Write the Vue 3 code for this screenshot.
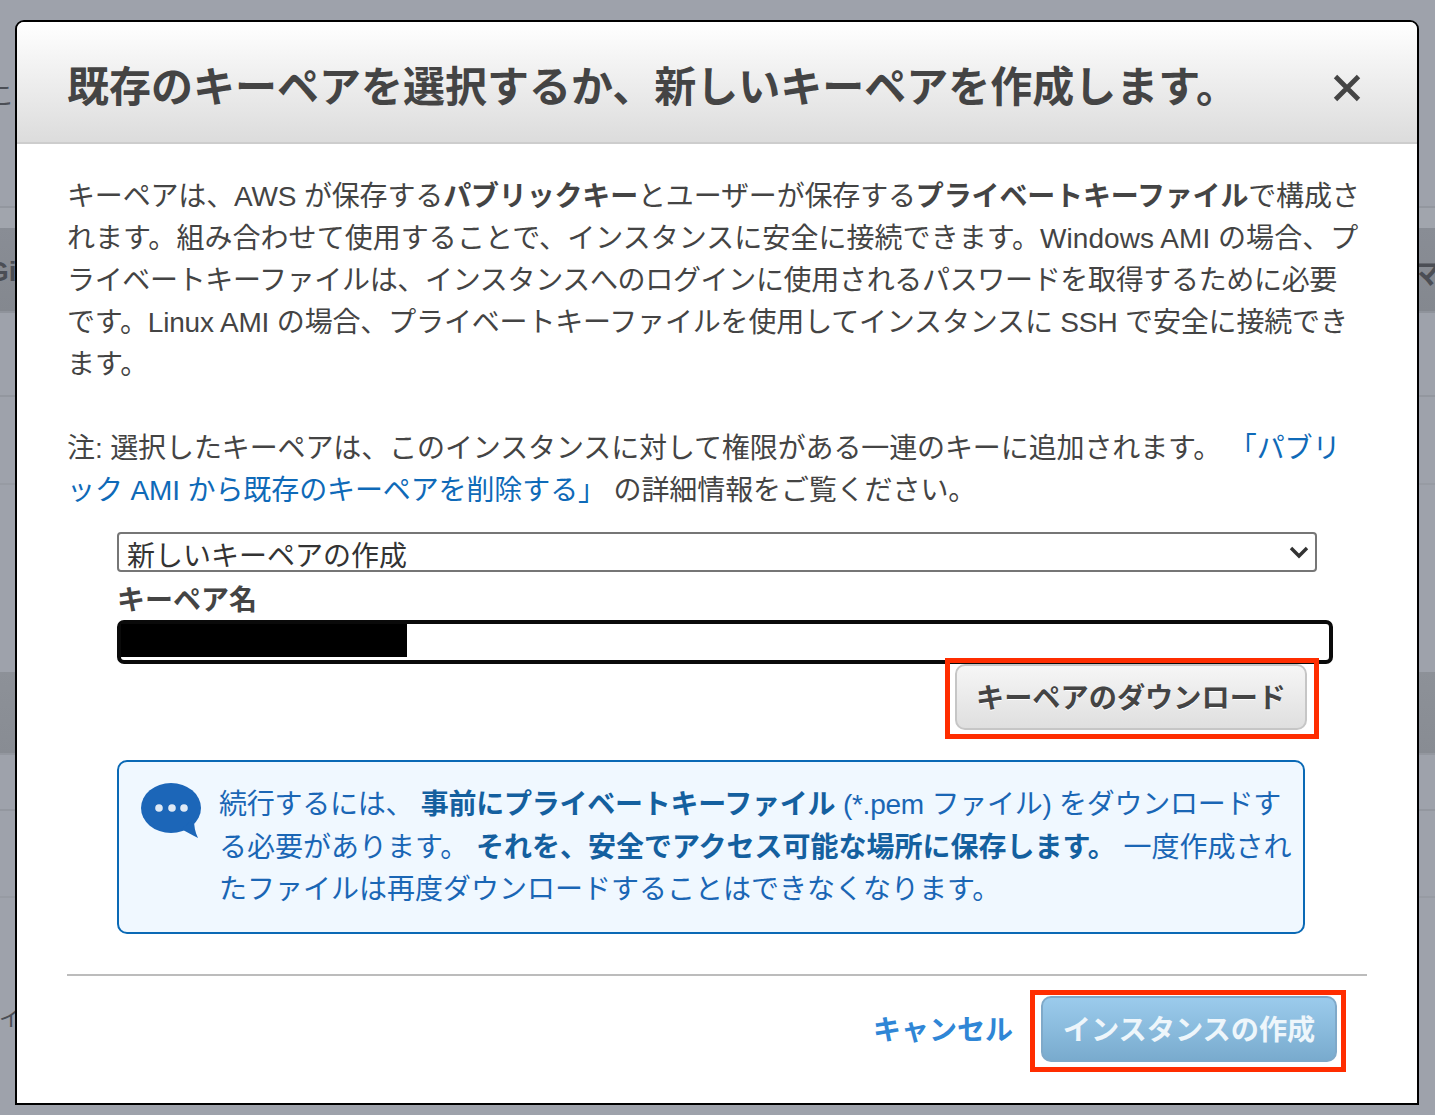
<script setup>
const rows = [
  { cls: 'r1', left: 'こ', right: '' },
  { cls: 'r2', left: '', right: '' },
  { cls: 'band', left: 'Gi', right: 'マ' },
  { cls: 'r3', left: '', right: '' },
  { cls: 'r4', left: '', right: '' },
  { cls: 'r5', left: '', right: '' },
  { cls: 'band2', left: '', right: '' },
  { cls: 'r6', left: '', right: '' },
  { cls: 'r7', left: '', right: '' },
  { cls: 'r8', left: 'イ', right: '' },
]
</script>

<template>
  <div class="page">
    <div class="backdrop">
      <div v-for="row in rows" :key="row.cls" class="row" :class="row.cls">
        <span class="bg-left">{{ row.left }}</span>
        <span class="bg-right">{{ row.right }}</span>
      </div>
    </div>

    <section class="modal">
      <header class="head">
        <h1>既存のキーペアを選択するか、新しいキーペアを作成します。</h1>
        <svg class="close" width="28" height="28" viewBox="0 0 28 28" aria-label="閉じる">
          <path d="M2.5 2.5 L25.5 25.5 M25.5 2.5 L2.5 25.5" stroke="#444" stroke-width="4.8" fill="none" />
        </svg>
      </header>

      <div class="body">
        <p class="para">
          <span class="line l1">キーペアは、AWS が保存する<b>パブリックキー</b>とユーザーが保存する<b>プライベートキーファイル</b>で構成さ</span>
          <span class="line l2">れます。組み合わせて使用することで、インスタンスに安全に接続できます。Windows AMI の場合、プ</span>
          <span class="line l3">ライベートキーファイルは、インスタンスへのログインに使用されるパスワードを取得するために必要</span>
          <span class="line l4">です。Linux AMI の場合、プライベートキーファイルを使用してインスタンスに SSH で安全に接続でき</span>
          <span class="line">ます。</span>
        </p>
        <p class="para note">
          <span class="line l5">注: 選択したキーペアは、このインスタンスに対して権限がある一連のキーに追加されます。 <a>「パブリ</a></span>
          <span class="line l5"><a>ック AMI から既存のキーペアを削除する」</a> の詳細情報をご覧ください。</span>
        </p>

        <div class="form">
          <div class="select">
            <span>新しいキーペアの作成</span>
            <svg width="20" height="14" viewBox="0 0 20 14">
              <path d="M2 3 L10 11 L18 3" stroke="#333" stroke-width="3.4" fill="none" />
            </svg>
          </div>
          <div class="label">キーペア名</div>
          <div class="input"><div class="redact"></div></div>
          <div class="dl-row">
            <button class="dl-btn" type="button">キーペアのダウンロード</button>
          </div>

          <div class="info">
            <svg class="bubble" width="62" height="56" viewBox="0 0 62 56">
              <ellipse cx="30" cy="25" rx="30" ry="25" fill="#1c66b8" />
              <path d="M40 46 C46 49 51 52 57 55 C54 49 53 43 53 36 Z" fill="#1c66b8" />
              <circle cx="18" cy="25" r="3.8" fill="#dfe9f5" />
              <circle cx="31" cy="25" r="3.8" fill="#dfe9f5" />
              <circle cx="43" cy="25" r="3.8" fill="#dfe9f5" />
            </svg>
            <p>
              <span class="line l6">続行するには、 <b>事前にプライベートキーファイル</b> (*.pem ファイル) をダウンロードす</span>
              <span class="line">る必要があります。 <b>それを、安全でアクセス可能な場所に保存します。</b> 一度作成され</span>
              <span class="line">たファイルは再度ダウンロードすることはできなくなります。</span>
            </p>
          </div>
        </div>

        <footer class="foot">
          <a class="cancel">キャンセル</a>
          <button class="create" type="button">インスタンスの作成</button>
        </footer>
      </div>
    </section>
  </div>
</template>

<style>
html, body { margin: 0; background: #9ea2ab; }
</style>

<style scoped>
.page {
  position: relative;
  width: 1435px;
  height: 1115px;
  overflow: hidden;
  background: #9ea2ab;
  font-family: "Liberation Sans", "Noto Sans CJK JP", sans-serif;
  color: #444;
}
.backdrop { display: flex; flex-direction: column; }
.row {
  display: flex;
  justify-content: space-between;
  align-items: center;
  box-sizing: border-box;
  border-bottom: 2px solid #93979f;
  font-size: 24px;
  color: #4b4e55;
  overflow: hidden;
}
.bg-left { margin-left: -10px; }
.bg-right { margin-right: -6px; }
.r1 { height: 208px; align-items: flex-start; padding-top: 76px; }
.r2 { height: 20px; background: #a1a5ad; border-bottom: 0; }
.band {
  height: 85px;
  padding-top: 4px;
  background: linear-gradient(#898d95, #84888f);
  font-weight: 700;
  font-size: 28px;
  border-bottom: 2px solid #8f939b;
}
.band .bg-left { margin-left: -13px; }
.r3 { height: 84px; }
.r4 { height: 88px; border-bottom-color: #979ba3; }
.r5 { height: 187px; border-bottom: 0; }
.band2 { height: 83px; background: linear-gradient(#8d9198, #888c93); }
.r6 { height: 56px; }
.r7 { height: 87px; border-bottom-color: #979ba3; }
.r8 { height: 217px; border-bottom: 0; align-items: flex-start; padding-top: 102px; }
.r8 .bg-left { margin-left: -1px; font-size: 22px; }

.modal {
  position: absolute;
  left: 15px;
  top: 20px;
  width: 1404px;
  height: 1085px;
  box-sizing: border-box;
  border: 2px solid #000;
  border-radius: 9px 9px 0 0;
  background: #fff;
  overflow: hidden;
}
.head {
  height: 122px;
  box-sizing: border-box;
  display: flex;
  justify-content: space-between;
  align-items: center;
  padding: 12px 56px 0 50px;
  background: linear-gradient(#ffffff, #dcdcdc);
  border-bottom: 2px solid #cdcdcd;
}
h1 {
  margin: 0;
  font-size: 42px;
  line-height: 60px;
  font-weight: 700;
  color: #444;
  white-space: nowrap;
}
.close { flex: none; filter: blur(0.5px); }
.body { padding: 32px 50px 0; }
.para {
  margin: 0 0 42px;
  font-size: 28px;
  line-height: 42px;
  white-space: nowrap;
  color: #444;
}
.para b { font-weight: 700; }
.line { display: block; }
.l1 { letter-spacing: -0.16px; }
.l2 { letter-spacing: 0.05px; }
.l3 { letter-spacing: -0.33px; }
.l4 { letter-spacing: -0.16px; }
.l5 { letter-spacing: -0.11px; }
.l6 { letter-spacing: -0.25px; }
.note { margin-bottom: 20px; }
.note a { color: #0f6ab8; }

.form { padding-left: 50px; }
.select {
  width: 1200px;
  height: 40px;
  box-sizing: border-box;
  border: 2px solid #767676;
  border-radius: 4px;
  display: flex;
  align-items: center;
  justify-content: space-between;
  padding: 0 6px 0 8px;
  font-size: 28px;
  color: #333;
}
.select span { line-height: 36px; padding-top: 10px; }
.select svg { flex: none; }
.label {
  margin: 9px 0 -1px;
  font-size: 28px;
  line-height: 40px;
  font-weight: 700;
  color: #444;
}
.input {
  width: 1216px;
  height: 44px;
  box-sizing: border-box;
  border: 4px solid #0a0a0a;
  border-radius: 7px;
  background: #fff;
}
.redact { width: 286px; height: 33px; background: #000; }
.dl-row {
  width: 1190px;
  display: flex;
  justify-content: flex-end;
}
.dl-btn {
  position: relative;
  width: 352px;
  height: 66px;
  box-sizing: border-box;
  border: 2px solid #c6c6c6;
  border-radius: 10px;
  background: linear-gradient(#f6f6f6, #dfdfdf);
  font: 700 28.2px/1 "Liberation Sans", "Noto Sans CJK JP", sans-serif;
  color: #444;
  text-shadow: 0 1px 0 #fff;
  padding: 3px 0 0;
}
.dl-btn::after {
  content: "";
  position: absolute;
  left: -12px;
  top: -8px;
  right: -14px;
  bottom: -11px;
  border: 5px solid #ff2d00;
  pointer-events: none;
}
.info {
  margin-top: 30px;
  width: 1188px;
  height: 174px;
  box-sizing: border-box;
  border: 2px solid #0a69b5;
  border-radius: 10px;
  background: #f0f8ff;
  display: flex;
  align-items: flex-start;
  padding: 21px 0 0 22px;
  color: #1a66b5;
}
.bubble { flex: none; margin-right: 16px; filter: blur(0.4px); }
.info p {
  margin: 1px 0 0;
  font-size: 28px;
  line-height: 42.5px;
  white-space: nowrap;
  color: #1a66b5;
}
.info b { color: #14609f; font-weight: 700; }

.foot {
  margin-top: 40px;
  padding-top: 20px;
  border-top: 2px solid #bcbcbc;
  display: flex;
  justify-content: flex-end;
  align-items: center;
  gap: 28px;
  padding-right: 30px;
}
.cancel {
  font-size: 28px;
  font-weight: 700;
  line-height: 62px;
  color: #2f86d6;
  padding-top: 4px;
}
.create {
  position: relative;
  width: 296px;
  height: 66px;
  box-sizing: border-box;
  border: 2px solid #7fa9c9;
  border-radius: 10px;
  background: linear-gradient(#9bcbec, #79abce);
  font: 700 28.2px/1 "Liberation Sans", "Noto Sans CJK JP", sans-serif;
  color: #eef6fb;
  padding: 2px 0 0;
}
.create::after {
  content: "";
  position: absolute;
  left: -13px;
  top: -8px;
  right: -11px;
  bottom: -12px;
  border: 5px solid #ff2d00;
  pointer-events: none;
}
</style>
